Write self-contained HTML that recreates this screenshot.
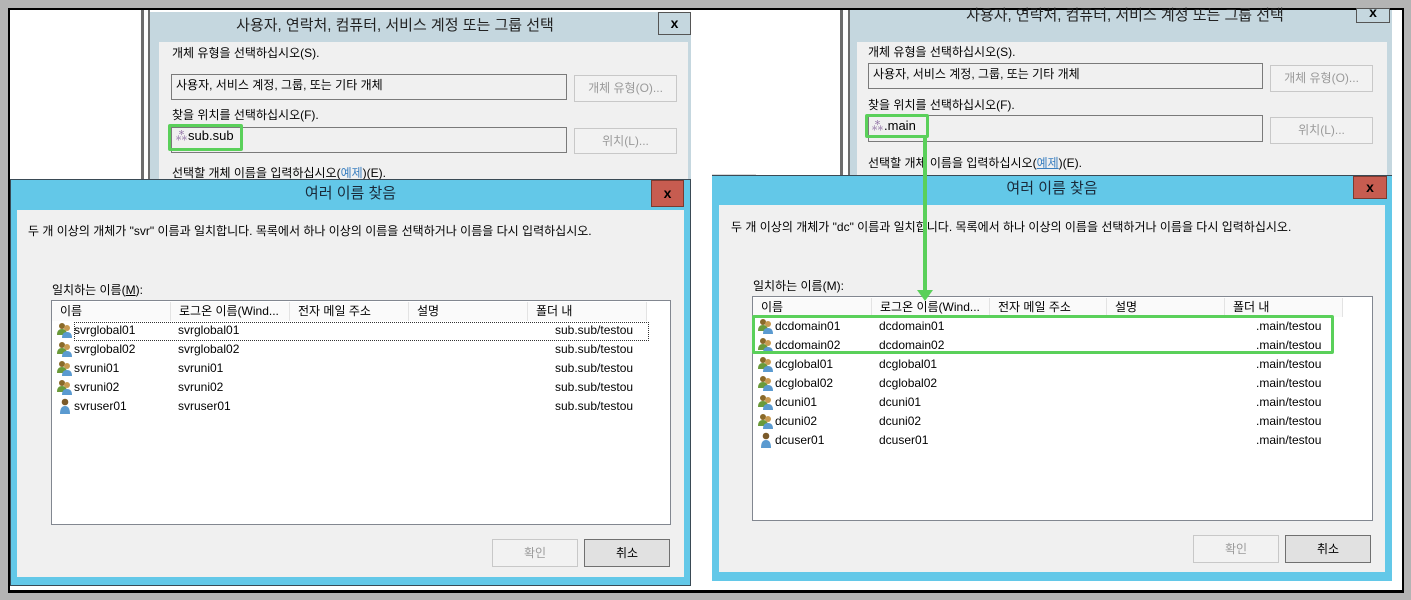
<!DOCTYPE html>
<html><head><meta charset="utf-8"><style>
*{margin:0;padding:0;box-sizing:border-box}
body{width:1411px;height:600px;background:#b4b4b4;position:relative;overflow:hidden;font-family:"Liberation Sans","Noto Sans CJK KR",sans-serif;font-size:12px;color:#000}
.a{position:absolute}
.t{position:absolute;white-space:nowrap;font-size:12px;line-height:14px}
.inp{position:absolute;background:#f0f0f0;border:1px solid #7a7a7a}
.btn{position:absolute;background:#f2f2f2;border:1px solid #c8c8c8;color:#9a9a9a;text-align:center;font-size:12px}
.btn2{position:absolute;background:#e1e1e1;border:1px solid #707070;text-align:center;font-size:12px}
.xb{position:absolute;border:1px solid #555;background:#c5d7df;text-align:center;font-weight:bold;font-size:14px}
.xr{position:absolute;background:#c75c50;border:1px solid #7a3a30;text-align:center;font-weight:bold;font-size:14px}
.list{position:absolute;background:#fff;border:1px solid #828790}
.hd{position:absolute;top:1px;height:19px;border-right:1px solid #e3e3e3;background:#fafafa;padding-left:8px;line-height:19px;font-size:12px}
.row{position:absolute;height:19px;line-height:19px;font-size:12px}
.green{position:absolute;border:3px solid #5ad05a;border-radius:2px}
</style></head><body>
<div class="a" style="left:8px;top:8px;width:1396px;height:585px;background:#000"></div>
<div class="a" style="left:10px;top:10px;width:1392px;height:580px;background:#fff"></div>

<div class="a" style="left:141px;top:10px;width:3px;height:175px;background:#6d6d6d"></div>
<div class="a" style="left:144px;top:10px;width:4px;height:175px;background:#fff"></div>
<div class="a" style="left:148px;top:10px;width:2px;height:175px;background:#6d6d6d"></div>
<div class="a" style="left:150px;top:12px;width:541px;height:173px;background:#c5d7df"></div>
<div class="t" style="left:150px;top:16px;width:490px;text-align:center;font-size:15px;line-height:20px;color:#222">사용자, 연락처, 컴퓨터, 서비스 계정 또는 그룹 선택</div>
<div class="xb" style="left:658px;top:12px;width:33px;height:23px;line-height:21px">x</div>
<div class="a" style="left:159px;top:42px;width:529px;height:143px;background:#f0f0f0"></div>
<div class="t" style="left:172px;top:46px">개체 유형을 선택하십시오(S).</div>
<div class="inp" style="left:171px;top:74px;width:396px;height:26px"></div>
<div class="t" style="left:176px;top:78px">사용자, 서비스 계정, 그룹, 또는 기타 개체</div>
<div class="btn" style="left:574px;top:75px;width:103px;height:27px;line-height:25px">개체 유형(O)...</div>
<div class="t" style="left:172px;top:108px">찾을 위치를 선택하십시오(F).</div>
<div class="inp" style="left:171px;top:127px;width:396px;height:26px"></div>
<div class="t" style="left:175px;top:129px;font-size:13px"><span style="color:#8a6aa0">⁂</span>sub.sub</div>
<div class="green" style="left:168px;top:124px;width:75px;height:27px"></div>
<div class="btn" style="left:574px;top:128px;width:103px;height:26px;line-height:24px">위치(L)...</div>
<div class="t" style="left:172px;top:166px">선택할 개체 이름을 입력하십시오(<span style="color:#3a7fc0">예제</span>)(E).</div>

<div class="a" style="left:10px;top:179px;width:681px;height:407px;background:#63c8e8;border:1px solid #3a4a55"></div>
<div class="t" style="left:10px;top:184px;width:681px;text-align:center;font-size:15px;line-height:20px;color:#1a2a3a">여러 이름 찾음</div>
<div class="xr" style="left:651px;top:180px;width:33px;height:27px;line-height:25px">x</div>
<div class="a" style="left:17px;top:210px;width:667px;height:367px;background:#f0f0f0"></div>
<div class="t" style="left:28px;top:224px">두 개 이상의 개체가 "svr" 이름과 일치합니다. 목록에서 하나 이상의 이름을 선택하거나 이름을 다시 입력하십시오.</div>
<div class="t" style="left:52px;top:283px">일치하는 이름(<u>M</u>):</div>
<div class="list" style="left:51px;top:300px;width:620px;height:225px">
 <div class="hd" style="left:0;width:119px">이름</div>
 <div class="hd" style="left:119px;width:119px">로그온 이름(Wind...</div>
 <div class="hd" style="left:238px;width:119px">전자 메일 주소</div>
 <div class="hd" style="left:357px;width:119px">설명</div>
 <div class="hd" style="left:476px;width:119px">폴더 내</div>
 <div class="a" style="left:22px;top:21px;width:575px;height:19px;border:1px dotted #333"></div>
</div>
<div id="L"></div>

<div class="a" style="left:10px;top:586px;width:681px;height:4px;background:#fff"></div>

<div class="a" style="left:840px;top:10px;width:3px;height:165px;background:#6d6d6d"></div>
<div class="a" style="left:843px;top:10px;width:5px;height:165px;background:#fff"></div>
<div class="a" style="left:848px;top:10px;width:2px;height:165px;background:#6d6d6d"></div>
<div class="a" style="left:850px;top:10px;width:542px;height:165px;background:#c5d7df"></div>
<div class="t" style="left:850px;top:6px;width:550px;text-align:center;font-size:15px;line-height:20px;color:#222">사용자, 연락처, 컴퓨터, 서비스 계정 또는 그룹 선택</div>
<div class="xb" style="left:1356px;top:8px;width:34px;height:15px;line-height:6px;overflow:hidden">x</div>
<div class="a" style="left:857px;top:42px;width:530px;height:133px;background:#f0f0f0"></div>
<div class="t" style="left:868px;top:45px">개체 유형을 선택하십시오(S).</div>
<div class="inp" style="left:868px;top:63px;width:395px;height:26px"></div>
<div class="t" style="left:873px;top:67px">사용자, 서비스 계정, 그룹, 또는 기타 개체</div>
<div class="btn" style="left:1270px;top:65px;width:103px;height:27px;line-height:25px">개체 유형(O)...</div>
<div class="t" style="left:868px;top:98px">찾을 위치를 선택하십시오(F).</div>
<div class="inp" style="left:868px;top:115px;width:395px;height:27px"></div>
<div class="t" style="left:871px;top:119px;font-size:13px"><span style="color:#8a6aa0">⁂</span>.main</div>
<div class="green" style="left:865px;top:114px;width:64px;height:24px"></div>
<div class="btn" style="left:1270px;top:117px;width:103px;height:27px;line-height:25px">위치(L)...</div>
<div class="t" style="left:868px;top:156px">선택할 개체 이름을 입력하십시오(<span style="color:#3a7fc0;text-decoration:underline">예제</span>)(E).</div>

<div class="a" style="left:712px;top:174px;width:44px;height:2px;background:#d8d8d8"></div>
<div class="a" style="left:712px;top:175px;width:680px;height:406px;background:#63c8e8;border-top:1px solid #3a4a55"></div>
<div class="t" style="left:712px;top:179px;width:680px;text-align:center;font-size:15px;line-height:20px;color:#1a2a3a">여러 이름 찾음</div>
<div class="xr" style="left:1353px;top:176px;width:34px;height:23px;line-height:21px">x</div>
<div class="a" style="left:719px;top:205px;width:666px;height:367px;background:#f0f0f0"></div>
<div class="t" style="left:731px;top:220px">두 개 이상의 개체가 "dc" 이름과 일치합니다. 목록에서 하나 이상의 이름을 선택하거나 이름을 다시 입력하십시오.</div>
<div class="t" style="left:753px;top:279px">일치하는 이름(M):</div>
<div class="list" style="left:752px;top:296px;width:621px;height:225px">
 <div class="hd" style="left:0;width:119px">이름</div>
 <div class="hd" style="left:119px;width:118px">로그온 이름(Wind...</div>
 <div class="hd" style="left:237px;width:117px">전자 메일 주소</div>
 <div class="hd" style="left:354px;width:118px">설명</div>
 <div class="hd" style="left:472px;width:118px">폴더 내</div>
</div>
<div id="R"></div>
<div class="green" style="left:752px;top:315px;width:582px;height:39px"></div>
<div class="a" style="left:923px;top:137px;width:4px;height:158px;background:#5ad05a"></div>
<svg class="a" style="left:917px;top:290px" width="16" height="12"><path d="M0 0 L16 0 L8 11 Z" fill="#5ad05a"/></svg>

<div class="btn" style="left:492px;top:539px;width:86px;height:28px;line-height:26px">확인</div>
<div class="btn2" style="left:584px;top:539px;width:86px;height:28px;line-height:26px">취소</div>
<div class="btn" style="left:1193px;top:535px;width:86px;height:28px;line-height:26px">확인</div>
<div class="btn2" style="left:1285px;top:535px;width:86px;height:28px;line-height:26px">취소</div>

<script>
var G='<svg width="16" height="16" viewBox="0 0 16 16"><circle cx="5" cy="4" r="3" fill="#8a6a2a"/><path d="M0 13 Q0 7 5 7 Q10 7 10 13Z" fill="#6a9a3a"/><circle cx="10" cy="6" r="3" fill="#c89a50"/><path d="M5 16 Q5 10 10 10 Q15 10 15 16Z" fill="#5a9ad0"/></svg>';
var U='<svg width="16" height="16" viewBox="0 0 16 16"><circle cx="8" cy="4" r="3.3" fill="#7a5a2a"/><path d="M3 16 Q3 8 8 8 Q13 8 13 16Z" fill="#5a9ad0"/></svg>';
function rows(id,x,y,data,fx){var h='';data.forEach(function(d,i){var t=y+i*19;
h+='<div class="row" style="left:'+x+'px;top:'+t+'px">'+'<span style="position:absolute;left:0;top:1px">'+(d[1]?U:G)+'</span></div>';
h+='<div class="row" style="left:'+(x+17)+'px;top:'+t+'px">'+d[0]+'</div>';
h+='<div class="row" style="left:'+(x+121)+'px;top:'+t+'px">'+d[0]+'</div>';
h+='<div class="row" style="left:'+fx+'px;top:'+t+'px">'+d[2]+'</div>';});
document.getElementById(id).outerHTML=h;}
rows('L',57,321,[['svrglobal01',0,'sub.sub/testou'],['svrglobal02',0,'sub.sub/testou'],['svruni01',0,'sub.sub/testou'],['svruni02',0,'sub.sub/testou'],['svruser01',1,'sub.sub/testou']],555);
rows('R',758,317,[['dcdomain01',0,'.main/testou'],['dcdomain02',0,'.main/testou'],['dcglobal01',0,'.main/testou'],['dcglobal02',0,'.main/testou'],['dcuni01',0,'.main/testou'],['dcuni02',0,'.main/testou'],['dcuser01',1,'.main/testou']],1256);
</script>
</body></html>
